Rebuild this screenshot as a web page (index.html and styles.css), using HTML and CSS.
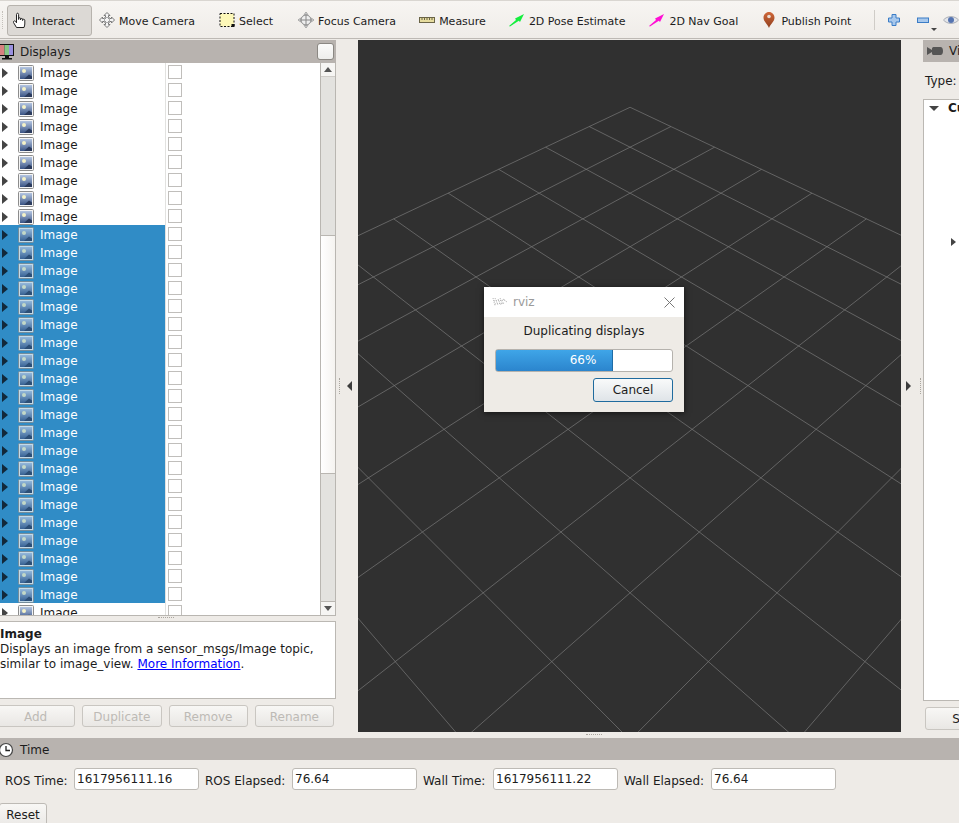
FILE: index.html
```html
<!DOCTYPE html>
<html lang="en">
<head>
    <meta charset="UTF-8">
    <title>RViz</title>
    <link rel="stylesheet" href="styles.css">
</head>
<body>

    <svg class="defs" width="0" height="0">
        <defs>
            <linearGradient id="imgSky" x1="0" y1="0" x2="0" y2="1">
                <stop offset="0" stop-color="#b4c6e2"/>
                <stop offset="1" stop-color="#3a5484"/>
            </linearGradient>
            <linearGradient id="pinFill" x1="0" y1="0" x2="0" y2="1">
                <stop offset="0" stop-color="#d0683a"/>
                <stop offset="1" stop-color="#8f3f1e"/>
            </linearGradient>
            <symbol id="image-icon" viewBox="0 0 16 16">
                <rect x="0.5" y="0.5" width="15" height="15" rx="1" fill="#f4f4f4" stroke="#8c8c8c"/>
                <rect x="2" y="2" width="12" height="12" fill="url(#imgSky)"/>
                <circle cx="6" cy="6" r="2" fill="#f5f3c8"/>
                <path d="M6 14 L11 9.5 L14 11.5 V14 Z" fill="#2a3a5c"/>
            </symbol>
        </defs>
    </svg>

    <div class="toolbar">
        <div class="grip"></div>
        <button class="tool active">
            <svg class="icon" viewBox="0 0 16 16"><path d="M4.5 15.5 L1.5 10.5 C1 9 2.8 8.3 3.6 9.4 L4.5 10.8 V2.5 C4.5 .8 6.6 .8 6.6 2.5 V7.5 V6.6 C6.6 5.5 8.6 5.5 8.6 6.6 V8 V7.2 C8.6 6.2 10.6 6.2 10.6 7.2 V8.5 V8 C10.6 7 12.8 7 12.8 8.2 V12 C12.8 13.5 12.3 14.5 12 15.5 Z" fill="#fff" stroke="#222" stroke-width="1"/></svg>
            <span>Interact</span>
        </button>
        <button class="tool">
            <svg class="icon" viewBox="0 0 16 16"><path d="M8 .5 L11 3.5 H9.5 V6.5 H12.5 V5 L15.5 8 L12.5 11 V9.5 H9.5 V12.5 H11 L8 15.5 L5 12.5 H6.5 V9.5 H3.5 V11 L.5 8 L3.5 5 V6.5 H6.5 V3.5 H5 Z" fill="#f4f4f4" stroke="#777"/><rect x="5.5" y="5.5" width="5" height="5" fill="none" stroke="#aaa"/></svg>
            <span>Move Camera</span>
        </button>
        <button class="tool tool-wide">
            <svg class="icon" viewBox="0 0 16 16"><rect x="1" y="1.5" width="14" height="13" fill="#fdf8b8" stroke="#111" stroke-dasharray="2 1.5"/><rect x="12.5" y="12" width="3" height="3" fill="#111"/></svg>
            <span>Select</span>
        </button>
        <button class="tool tool-tight">
            <svg class="icon" viewBox="0 0 16 16"><circle cx="8" cy="8" r="5" fill="#eee" stroke="#888"/><path d="M8 .5 V15.5 M.5 8 H15.5" stroke="#888"/><path d="M8 0 L10 2.5 H6 Z M8 16 L10 13.5 H6 Z M0 8 L2.5 6 V10 Z M16 8 L13.5 6 V10 Z" fill="#ccc" stroke="#888" stroke-width=".5"/></svg>
            <span>Focus Camera</span>
        </button>
        <button class="tool tool-tight">
            <svg class="icon" viewBox="0 0 16 16"><rect x=".5" y="5.5" width="15" height="5" fill="#e6dc9e" stroke="#6a6446"/><path d="M3 6 V8 M5.5 6 V8 M8 6 V8 M10.5 6 V8 M13 6 V8" stroke="#6a6446"/></svg>
            <span>Measure</span>
        </button>
        <button class="tool">
            <svg class="icon" viewBox="0 0 16 16"><path d="M0 14 L7 8 L6 6.5 L15 2 L11 10 L9.8 8.8 L1 14.5 Z" fill="#14ee3e"/></svg>
            <span>2D Pose Estimate</span>
        </button>
        <button class="tool tool-tight">
            <svg class="icon" viewBox="0 0 16 16"><path d="M0 14 L7 8 L6 6.5 L15 2 L11 10 L9.8 8.8 L1 14.5 Z" fill="#ff0fd4"/></svg>
            <span>2D Nav Goal</span>
        </button>
        <button class="tool">
            <svg class="icon" viewBox="0 0 16 16"><path d="M8 16 C6.5 12 2.5 9.5 2.5 5.7 C2.5 2.5 5 0 8 0 C11 0 13.5 2.5 13.5 5.7 C13.5 9.5 9.5 12 8 16 Z" fill="url(#pinFill)"/><circle cx="8" cy="4.5" r="1.8" fill="#e8dcd4"/></svg>
            <span>Publish Point</span>
        </button>
        <div class="tool-sep"></div>
        <button class="tool-small tool-plus">
            <svg class="icon" viewBox="0 0 16 16"><path d="M6 2.5 H10 V6 H13.5 V10 H10 V13.5 H6 V10 H2.5 V6 H6 Z" fill="#a8c8ec" stroke="#3a7cc6"/></svg>
        </button>
        <button class="tool-small tool-minus">
            <svg class="icon" viewBox="0 0 16 16"><rect x="2.5" y="6" width="11" height="4.5" fill="#a8c8ec" stroke="#3a7cc6"/></svg>
            <i class="menu-caret"></i>
        </button>
        <button class="tool-small">
            <svg class="icon" viewBox="0 0 16 16"><path d="M.5 8 C4 3.5 12 3.5 15.5 8 C12 12.5 4 12.5 .5 8 Z" fill="#e4e6ea" stroke="#a9adb5"/><circle cx="8" cy="8" r="3" fill="#5574b0"/></svg>
        </button>
    </div>

    <div class="main">
        <div class="dock-left">
            <div class="dock-title">
                <svg class="title-icon" viewBox="0 0 14 16">
                    <rect x="-1" y="0" width="15" height="12" fill="#111"/>
                    <rect x="0" y="1" width="4.5" height="10" fill="#d98080"/>
                    <rect x="4.5" y="1" width="4.5" height="10" fill="#86c686"/>
                    <rect x="9" y="1" width="4" height="10" fill="#9a90e0"/>
                    <path d="M5 12 H9 V14 H12 V15.5 H2 V14 H5 Z" fill="#111"/>
                </svg>
                <span>Displays</span>
                <div class="title-check"></div>
            </div>
            <div class="tree">
                <div class="tree-rows" id="rows"></div>
                <div class="scrollbar">
                    <div class="scroll-btn"><i class="caret-up"></i></div>
                    <div class="scroll-track">
                        <div class="scroll-thumb"></div>
                    </div>
                    <div class="scroll-btn scroll-btn-down"><i class="caret-down"></i></div>
                </div>
            </div>
            <div class="splitter-h"><i class="dots-h"></i></div>
            <div class="desc">
                <b>Image</b><br>
                Displays an image from a sensor_msgs/Image topic,<br>
                similar to image_view. <a href="#">More Information</a>.
            </div>
            <div class="dock-buttons">
                <button class="btn" disabled>Add</button>
                <button class="btn" disabled>Duplicate</button>
                <button class="btn" disabled>Remove</button>
                <button class="btn" disabled>Rename</button>
            </div>
        </div>

        <div class="handle handle-left"><i class="dots-v"></i><i class="arrow-left"></i></div>

        <div class="canvas">
            <svg class="grid" id="grid" width="543" height="692"></svg>

            <div class="dialog">
                <div class="dialog-title">
                    <svg class="dialog-icon" viewBox="0 0 16 10">
                        <path d="M1 1 L3 9 M3 1 L6 8 M6 2 L9 8 M8 1 L11 7 M11 2 L15 5 M2 4 L14 3 M3 7 L13 6" stroke="#b4b4b4" stroke-width="1" stroke-dasharray="1 1" fill="none"/>
                    </svg>
                    <span class="dialog-name">rviz</span>
                    <svg class="dialog-close" viewBox="0 0 11 11"><path d="M.5 .5 L10.5 10.5 M10.5 .5 L.5 10.5" stroke="#777" fill="none"/></svg>
                </div>
                <div class="dialog-body">
                    <div class="dialog-text">Duplicating displays</div>
                    <div class="progress">
                        <div class="progress-fill"></div>
                        <span class="progress-label">66%</span>
                    </div>
                    <div class="dialog-actions">
                        <button class="btn-default">Cancel</button>
                    </div>
                </div>
            </div>
        </div>

        <div class="handle handle-right"><i class="arrow-right"></i><i class="dots-v"></i></div>

        <div class="dock-right">
            <div class="dock-title views-title">
                <svg class="title-icon" viewBox="0 0 16 12"><path d="M0 2 L5 5 V3.5 C5 2.5 6 2 7 2 H13.5 C15 2 16 3.5 16 6 C16 8.5 15 10 13.5 10 H7 C6 10 5 9.5 5 8.5 V7 L0 10 Z" fill="#555"/></svg>
                <span>Views</span>
            </div>
            <div class="type-row">Type:</div>
            <div class="views-box">
                <div class="views-head"><i class="caret-open"></i><b>Current View</b></div>
                <i class="arrow-closed"></i>
            </div>
            <button class="btn save-btn">Save</button>
        </div>
    </div>

    <div class="splitter-bottom"><i class="dots-h"></i></div>

    <div class="time-panel">
        <div class="dock-title time-title">
            <svg class="title-icon" viewBox="0 0 16 16"><circle cx="8" cy="8" r="6.5" fill="#fff" stroke="#444" stroke-width="1.2"/><path d="M8 4 V8.5 H12" fill="none" stroke="#222" stroke-width="1.3"/></svg>
            <span>Time</span>
        </div>
        <div class="time-row">
            <label>ROS Time:</label><input class="time-field" value="1617956111.16" readonly>
            <label>ROS Elapsed:</label><input class="time-field" value="76.64" readonly>
            <label>Wall Time:</label><input class="time-field" value="1617956111.22" readonly>
            <label>Wall Elapsed:</label><input class="time-field" value="76.64" readonly>
        </div>
        <button class="btn reset-btn">Reset</button>
    </div>

    <script src="script.js"></script>
</body>
</html>
```

FILE: styles.css
```css
* {
    box-sizing: border-box;
}

body {
    margin: 0;
    width: 959px;
    height: 823px;
    overflow: hidden;
    font-family: 'DejaVu Sans', sans-serif;
    font-size: 12px;
    color: #1c1c1c;
    background-color: #eeebe7;
}

button {
    font-family: inherit;
    font-size: 12px;
    color: inherit;
}

.defs {
    display: block;
    height: 0;
}

/* toolbar */
.toolbar {
    display: flex;
    align-items: center;
    gap: 2px;
    height: 39px;
    padding: 1px 0 0 2px;
    border-top: 1px solid #d9d6d1;
    border-bottom: 1px solid #bdb9b4;
    background: linear-gradient(#f7f5f2, #efece8);
}

.grip {
    width: 1px;
    height: 18px;
    margin-right: 2px;
    border-left: 1px dotted #c4c0ba;
}

.tool {
    display: flex;
    align-items: center;
    gap: 4px;
    height: 31px;
    padding: 0 16px 0 4px;
    border: 1px solid transparent;
    border-radius: 3px;
    background: none;
    font-size: 11px;
    white-space: nowrap;
}

.tool span {
    padding-top: 2px;
}

.tool-wide {
    padding-right: 17px;
}

.tool-tight {
    padding-right: 15px;
}

.tool.active {
    background-color: #dcd9d5;
    border-color: #b7b3ad;
}

.icon {
    display: block;
    width: 16px;
    height: 16px;
    flex-shrink: 0;
}

.tool-sep {
    width: 1px;
    height: 20px;
    margin: 0 4px 0 4px;
    background-color: #cfccc7;
}

.tool-small {
    position: relative;
    display: flex;
    align-items: center;
    width: 31px;
    height: 31px;
    padding: 0 0 0 5px;
    border: none;
    background: none;
}

.tool-plus {
    width: 39px;
}

.tool-minus {
    width: 38px;
}

.menu-caret {
    position: absolute;
    left: 21px;
    top: 23px;
    border-left: 3px solid transparent;
    border-right: 3px solid transparent;
    border-top: 3px solid #444;
}

/* main area */
.main {
    display: flex;
    height: 693px;
    padding-top: 1px;
}

.dock-left {
    display: flex;
    flex-direction: column;
    width: 336px;
    flex-shrink: 0;
}

.dock-title {
    display: flex;
    align-items: center;
    gap: 6px;
    height: 23px;
    background-color: #b8b3af;
}

.title-icon {
    display: block;
    width: 14px;
    height: 16px;
    flex-shrink: 0;
}

.title-check {
    width: 17px;
    height: 17px;
    margin-left: auto;
    margin-right: 2px;
    border: 1px solid #8b8883;
    border-radius: 3px;
    background: linear-gradient(#fbfbfa, #eeeeec);
}

/* display tree */
.tree {
    display: flex;
    height: 553px;
    border-right: 1px solid #b9b6b1;
    border-bottom: 1px solid #b9b6b1;
    background-color: #fff;
}

.tree-rows {
    width: 320px;
    height: 552px;
    overflow: hidden;
}

.row {
    display: flex;
    height: 18px;
}

.row-name {
    display: flex;
    align-items: center;
    width: 165px;
    height: 18px;
    padding: 2px 0 0 2px;
}

.row.selected .row-name {
    background-color: #308cc6;
    color: #fff;
}

.row-arrow {
    width: 0;
    height: 0;
    margin-right: 10px;
    border-top: 5px solid transparent;
    border-bottom: 5px solid transparent;
    border-left: 6px solid #444;
}

.row.selected .row-arrow {
    border-left-color: #12283a;
}

.row-icon {
    display: block;
    width: 16px;
    height: 16px;
    margin-right: 6px;
}

.row.selected .row-icon {
    opacity: 0.75;
}

.row-check {
    width: 14px;
    height: 14px;
    margin: 2px 0 0 2px;
    border: 1px solid #c0bebb;
    background-color: #fff;
}

.row-line {
    width: 1px;
    background-color: #e2e2e0;
}

.scrollbar {
    display: flex;
    flex-direction: column;
    width: 15px;
    border-left: 1px solid #b9b6b1;
    background-color: #e3e2df;
}

.scroll-btn {
    display: flex;
    align-items: center;
    justify-content: center;
    height: 14px;
    border-bottom: 1px solid #cfccc8;
    background-color: #f6f5f3;
}

.scroll-btn-down {
    border-top: 1px solid #b9b6b1;
    border-bottom: none;
}

.caret-up {
    border-left: 4px solid transparent;
    border-right: 4px solid transparent;
    border-bottom: 5px solid #555;
}

.caret-down {
    border-left: 4px solid transparent;
    border-right: 4px solid transparent;
    border-top: 5px solid #555;
}

.scroll-track {
    flex: 1;
    padding-top: 158px;
}

.scroll-thumb {
    height: 239px;
    border-top: 1px solid #b9b6b1;
    border-bottom: 1px solid #b9b6b1;
    background: linear-gradient(90deg, #fff, #f5f3f0);
}

.splitter-h {
    display: flex;
    justify-content: center;
    height: 5px;
    padding: 1px 4px 0 0;
}

.dots-h {
    display: block;
    width: 16px;
    height: 1px;
    border-top: 1px dotted #aaa69f;
}

.desc {
    height: 78px;
    padding-top: 5px;
    border: 1px solid #bbb8b3;
    border-left: none;
    background-color: #fff;
    line-height: 15px;
}

.desc a {
    color: #0000ff;
}

.dock-buttons {
    display: grid;
    grid-template-columns: repeat(4, 79.25px);
    gap: 7px;
    margin: 6px 0 0 -4px;
}

.btn {
    height: 22px;
    padding: 1px 0 0;
    border: 1px solid #c9c6c1;
    border-radius: 3px;
    background: linear-gradient(#f8f7f5, #e9e7e4);
    color: #1c1c1c;
}

.btn:disabled {
    color: #bdbab5;
}

/* side handles */
.handle {
    display: flex;
    align-items: center;
    width: 22px;
    flex-shrink: 0;
}

.dots-v {
    display: block;
    width: 1px;
    height: 16px;
    border-left: 1px dotted #aaa69f;
}

.handle-left .dots-v {
    margin: 0 7px 0 3px;
}

.arrow-left {
    border-top: 5px solid transparent;
    border-bottom: 5px solid transparent;
    border-right: 5px solid #3c3c3c;
}

.handle-right .dots-v {
    margin-left: 9px;
}

.arrow-right {
    margin-left: 5px;
    border-top: 5px solid transparent;
    border-bottom: 5px solid transparent;
    border-left: 5px solid #3c3c3c;
}

/* 3d view */
.canvas {
    position: relative;
    width: 543px;
    height: 692px;
    flex-shrink: 0;
    overflow: hidden;
    background-color: #303030;
}

.grid {
    display: block;
}

.grid line {
    stroke: #7a7a7a;
    stroke-width: 0.7;
}

.dialog {
    position: absolute;
    left: 126px;
    top: 247px;
    width: 200px;
    height: 125px;
    background-color: #eeebe6;
    box-shadow: 0 1px 6px rgba(0, 0, 0, 0.6);
}

.dialog-title {
    display: flex;
    align-items: center;
    height: 30px;
    padding: 0 9px 0 8px;
    background-color: #fff;
}

.dialog-icon {
    display: block;
    width: 16px;
    height: 10px;
    margin-right: 5px;
}

.dialog-name {
    color: #9a9a9a;
}

.dialog-close {
    display: block;
    width: 11px;
    height: 11px;
    margin-left: auto;
}

.dialog-body {
    padding: 7px 11px 0;
}

.dialog-text {
    height: 15px;
    line-height: 15px;
    text-align: center;
}

.progress {
    position: relative;
    height: 23px;
    margin-top: 10px;
    border: 1px solid #b5b2ad;
    border-radius: 3px;
    background-color: #fff;
    overflow: hidden;
}

.progress-fill {
    width: 116px;
    height: 100%;
    margin: -1px 0 0 -1px;
    box-sizing: content-box;
    border: 1px solid #1e6ca6;
    border-radius: 3px 0 0 3px;
    background: linear-gradient(#3fa5e8, #2b85cd);
}

.progress-label {
    position: absolute;
    left: 0;
    right: 2px;
    top: 3px;
    text-align: center;
    color: #fff;
}

.dialog-actions {
    display: flex;
    justify-content: flex-end;
    margin-top: 6px;
}

.btn-default {
    width: 80px;
    height: 24px;
    padding: 0;
    border: 1px solid #1f6b9e;
    border-radius: 3px;
    background: linear-gradient(#f9fafa, #dfe4e8);
}

/* right dock */
.dock-right {
    display: flex;
    flex-direction: column;
    width: 300px;
    flex-shrink: 0;
}

.views-title {
    height: 22px;
    padding-left: 4px;
}

.views-title .title-icon {
    width: 16px;
}

.type-row {
    height: 37px;
    padding: 12px 0 0 2px;
}

.views-box {
    position: relative;
    height: 602px;
    border: 1px solid #bbb8b3;
    background-color: #fff;
}

.views-head {
    display: flex;
    align-items: center;
    height: 16px;
    padding-left: 5px;
}

.caret-open {
    margin-right: 9px;
    border-left: 5px solid transparent;
    border-right: 5px solid transparent;
    border-top: 5px solid #444;
}

.arrow-closed {
    position: absolute;
    left: 27px;
    top: 138px;
    border-top: 4.5px solid transparent;
    border-bottom: 4.5px solid transparent;
    border-left: 5px solid #444;
}

.save-btn {
    width: 84px;
    height: 23px;
    margin: 6px 0 0 2px;
    flex-shrink: 0;
}

/* time panel */
.splitter-bottom {
    display: flex;
    justify-content: center;
    height: 6px;
    padding-top: 2px;
    margin-left: 229px;
}

.time-title {
    height: 22px;
    padding-top: 1px;
}

.time-title .title-icon {
    width: 16px;
    margin-left: -2px;
}

.time-row {
    display: grid;
    grid-template-columns: 63px 125px 81px 125px 64px 125px 81px 125px;
    align-items: center;
    gap: 6px;
    height: 22px;
    margin-top: 8px;
    padding-left: 5px;
}

.time-row label {
    padding-top: 4px;
    white-space: nowrap;
}

.time-field {
    width: 125px;
    height: 22px;
    padding: 0 0 0 2px;
    border: 1px solid #bdbab5;
    border-radius: 3px;
    background-color: #fff;
    font-family: inherit;
    font-size: 12px;
    color: #1c1c1c;
}

.reset-btn {
    display: block;
    width: 48px;
    height: 26px;
    margin: 13px 0 0 -1px;
    padding: 0 0 2px;
    border-color: #bdbab5;
}
```

FILE: script.js
```js
// display tree rows
const rows = document.getElementById('rows');
for (let i = 0; i < 31; i++) {
    const row = document.createElement('div');
    row.className = i >= 9 && i < 30 ? 'row selected' : 'row';
    row.innerHTML = '<div class="row-name"><i class="row-arrow"></i>' +
        '<svg class="row-icon"><use href="#image-icon"></use></svg>Image</div>' +
        '<div class="row-line"></div><div class="row-check"></div>';
    rows.appendChild(row);
}

// floor grid, 10 x 10 cells seen in perspective from one corner
const grid = document.getElementById('grid');

function project(i, j) {
    const v = i + j;
    const d = 1 - 0.03306 * v;
    return {
        x: 272.07 + 39.46 * (i - j) / d,
        y: 50 + (42 + 43.9 * v) / (2.431 * d)
    };
}

function addLine(a, b) {
    const line = document.createElementNS('http://www.w3.org/2000/svg', 'line');
    line.setAttribute('x1', a.x);
    line.setAttribute('y1', a.y);
    line.setAttribute('x2', b.x);
    line.setAttribute('y2', b.y);
    grid.appendChild(line);
}

for (let n = 0; n <= 10; n++) {
    addLine(project(n, 0), project(n, 10));
    addLine(project(0, n), project(10, n));
}
```
